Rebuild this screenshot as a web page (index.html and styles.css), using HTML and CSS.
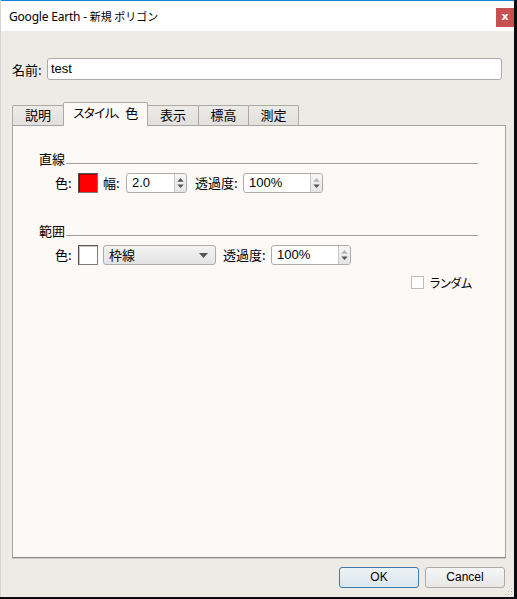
FILE: index.html
```html
<!DOCTYPE html>
<html lang="ja">
<head>
<meta charset="utf-8">
<title>Google Earth - 新規 ポリゴン</title>
<link rel="stylesheet" href="styles.css">
</head>
<body>
<div class="window">
  <div class="titlebar">
    <span class="title">Google Earth - <span class="title-ja">新規 ポリゴン</span></span>
    <div class="close">x</div>
  </div>
  <div class="client">
    <div class="name-row">
      <span class="name-label">名前:</span>
      <div class="textbox">test</div>
    </div>
    <div class="tabs">
      <div class="tab t1">説明</div>
      <div class="tab t2 active"><span class="narrow">スタイル、</span>色</div>
      <div class="tab t3">表示</div>
      <div class="tab t4">標高</div>
      <div class="tab t5">測定</div>
    </div>
    <div class="panel">
      <div class="group-head"><span class="group-title">直線</span><span class="group-line"></span></div>
      <div class="row">
        <span class="lbl w-color">色:</span>
        <span class="swatch red"></span>
        <span class="lbl w-width">幅:</span>
        <div class="spin w61">
          <span class="spin-val">2.0</span>
          <svg class="arrows" width="12" height="18" viewBox="0 0 12 18"><path d="M2.5 7.5 L6 3.5 L9.5 7.5Z" fill="#555"/><path d="M2.5 10.5 L6 14.5 L9.5 10.5Z" fill="#555"/></svg>
        </div>
        <span class="lbl w-alpha">透過度:</span>
        <div class="spin w80">
          <span class="spin-val">100%</span>
          <svg class="arrows" width="12" height="18" viewBox="0 0 12 18"><path d="M2.5 7.5 L6 3.5 L9.5 7.5Z" fill="#b4b4b4"/><path d="M2.5 10.5 L6 14.5 L9.5 10.5Z" fill="#555"/></svg>
        </div>
      </div>
      <div class="group-head second"><span class="group-title">範囲</span><span class="group-line"></span></div>
      <div class="row">
        <span class="lbl w-color">色:</span>
        <span class="swatch white"></span>
        <div class="combo">
          <span class="combo-val">枠線</span>
          <svg class="combo-arrow" width="9" height="5" viewBox="0 0 9 5"><path d="M0 0 L9 0 L4.5 5Z" fill="#555"/></svg>
        </div>
        <span class="lbl w-alpha2">透過度:</span>
        <div class="spin w80">
          <span class="spin-val">100%</span>
          <svg class="arrows" width="12" height="18" viewBox="0 0 12 18"><path d="M2.5 7.5 L6 3.5 L9.5 7.5Z" fill="#b4b4b4"/><path d="M2.5 10.5 L6 14.5 L9.5 10.5Z" fill="#555"/></svg>
        </div>
      </div>
      <div class="check-row">
        <span class="checkbox"></span>
        <span class="check-label">ランダム</span>
      </div>
    </div>
    <div class="footer">
      <button class="btn ok">OK</button>
      <button class="btn cancel">Cancel</button>
    </div>
  </div>
  <svg class="grip" width="9" height="9" viewBox="0 0 9 9">
    <rect x="7" y="1" width="1" height="1" fill="#b8b5b1"/>
    <rect x="4" y="4" width="1" height="1" fill="#b8b5b1"/>
    <rect x="7" y="4" width="1" height="1" fill="#b8b5b1"/>
    <rect x="1" y="7" width="1" height="1" fill="#b8b5b1"/>
    <rect x="4" y="7" width="1" height="1" fill="#b8b5b1"/>
    <rect x="7" y="7" width="1" height="1" fill="#b8b5b1"/>
  </svg>
</div>
</body>
</html>
```
FILE: styles.css
```css
* { box-sizing: border-box; }
html, body { margin: 0; padding: 0; }
body {
  width: 517px;
  height: 599px;
  overflow: hidden;
  background: #0b0c12;
  font-family: "Liberation Sans", "Noto Sans CJK JP", sans-serif;
  font-size: 12px;
  color: #000;
}
.window {
  position: relative;
  width: 514px;
  height: 597px;
  background: #eeebe7;
  border-left: 1px solid #d6d4d1;
  display: flex;
  flex-direction: column;
}
.titlebar {
  height: 31px;
  background: #fff;
  border-top: 1px solid #1883d7;
  display: flex;
  align-items: flex-start;
  justify-content: space-between;
  padding-left: 8px;
}
.title {
  font-family: "Noto Sans", "Noto Sans CJK JP", sans-serif;
  font-size: 12px;
  line-height: 14px;
  margin-top: 8px;
  letter-spacing: -0.2px;
}
.title-ja {
  font-family: "Noto Sans CJK JP", sans-serif;
  font-size: 11px;
  letter-spacing: 0;
}
.close {
  width: 18px;
  height: 19px;
  margin-top: 7px;
  background: #c75050;
  color: #fff;
  font-family: "DejaVu Sans", sans-serif;
  font-weight: bold;
  font-size: 11px;
  line-height: 17px;
  text-align: center;
}
.client {
  flex: 1;
  display: flex;
  flex-direction: column;
  padding: 0 8px 0 11px;
}
.name-row {
  margin-top: 27px;
  display: flex;
  align-items: center;
  height: 22px;
}
.name-label {
  width: 35px;
  font-family: "Noto Sans CJK JP", sans-serif;
  font-size: 13px;
}
.textbox {
  width: 455px;
  height: 22px;
  background: #fff;
  border: 1px solid #ababab;
  border-radius: 3px;
  padding-left: 3px;
  line-height: 20px;
  font-family: "Liberation Sans", sans-serif;
  font-size: 13px;
}
.tabs {
  margin-top: 22px;
  height: 23px;
  display: flex;
  align-items: flex-end;
  position: relative;
  z-index: 1;
}
.tab {
  height: 20px;
  border: 1px solid #adaaa6;
  border-bottom: none;
  margin-right: -1px;
  background: linear-gradient(#ecebe8, #e2e0dc);
  font-family: "Noto Sans CJK JP", sans-serif;
  font-size: 13px;
  text-align: center;
  line-height: 18px;
  border-radius: 2px 2px 0 0;
}
.narrow { letter-spacing: -2px; font-size: 12.5px; }
.t1 { width: 52px; }
.t2 { width: 85px; }
.t3 { width: 52px; }
.t4 { width: 51px; }
.t5 { width: 51px; }
.tab.active {
  height: 24px;
  margin-bottom: -1px;
  background: #fcf9f6;
  line-height: 20px;
  position: relative;
  z-index: 2;
}
.panel {
  width: 494px;
  height: 433px;
  background: #fcf9f6;
  border: 1px solid #a7a4a0;
  border-bottom-color: #8f8c88;
  box-shadow: 0 1px 0 #cfccc8;
  padding: 26px 27px 0 26px;
  display: flex;
  flex-direction: column;
}
.group-head {
  display: flex;
  align-items: flex-end;
  height: 14px;
}
.group-head.second { margin-top: 31px; }
.group-title {
  font-family: "Noto Sans CJK JP", sans-serif;
  font-size: 13px;
  line-height: 14px;
  margin-top: -2px;
}
.group-line {
  flex: 1;
  height: 1px;
  background: #a3a09c;
  margin-bottom: 2px;
  margin-left: 1px;
}
.row {
  margin-top: 7px;
  height: 20px;
  display: flex;
  align-items: center;
}
.lbl {
  font-family: "Noto Sans CJK JP", sans-serif;
  font-size: 13px;
  line-height: 14px;
}
.w-color { width: 23px; margin-left: 16px; }
.w-width { width: 23px; margin-left: 5px; }
.w-alpha { width: 48px; margin-left: 8px; }
.w-alpha2 { width: 48px; margin-left: 7px; }
.swatch {
  width: 20px;
  height: 20px;
  border: 1px solid #7a7a7a;
  border-left-color: #4a4a4a;
  border-top-color: #5a5a5a;
}
.swatch.red { background: #ff0000; box-shadow: inset 1px 1px 0 #9a0000; }
.swatch.white { background: #fff; box-shadow: inset 1px 1px 0 #c8c8c8; }
.spin {
  height: 20px;
  display: flex;
  background: #fff;
  border: 1px solid #acacac;
  border-radius: 3px;
  overflow: hidden;
}
.w61 { width: 61px; }
.w80 { width: 80px; }
.spin-val {
  flex: 1;
  padding-left: 5px;
  line-height: 18px;
  font-family: "Liberation Sans", sans-serif;
  font-size: 13px;
}
.arrows {
  display: block;
  width: 12px;
  height: 18px;
  border-left: 1px solid #c9c9c9;
  background: linear-gradient(#f7f7f7, #e4e4e4);
}
.combo {
  width: 113px;
  height: 20px;
  margin-left: 5px;
  border: 1px solid #acacac;
  border-radius: 3px;
  background: linear-gradient(#f3f3f3, #e3e3e3);
  display: flex;
  align-items: center;
  justify-content: space-between;
  padding: 0 7px 0 5px;
}
.combo-val {
  font-family: "Noto Sans CJK JP", sans-serif;
  font-size: 13px;
  line-height: 14px;
}
.combo-arrow { display: block; }
.check-row {
  margin-top: 11px;
  display: flex;
  align-items: center;
  justify-content: flex-end;
  padding-right: 7px;
  height: 13px;
}
.checkbox {
  width: 13px;
  height: 13px;
  border: 1px solid #bcbcbc;
  background: #fff;
}
.check-label {
  margin-left: 5px;
  font-family: "Noto Sans CJK JP", sans-serif;
  font-size: 12px;
  line-height: 14px;
  letter-spacing: -1.5px;
}
.footer {
  margin-top: 9px;
  display: flex;
  justify-content: flex-end;
  gap: 6px;
  padding-right: 1px;
}
.btn {
  width: 80px;
  height: 21px;
  margin: 0;
  padding: 0;
  border-radius: 3px;
  font-family: "Liberation Sans", sans-serif;
  font-size: 12px;
  color: #000;
  line-height: 19px;
}
.btn.ok {
  border: 1px solid #3d7bad;
  background: linear-gradient(#ecf3f8, #dbe6ee);
}
.btn.cancel {
  border: 1px solid #acacac;
  background: linear-gradient(#f6f6f6, #e7e7e7);
}
.grip {
  position: absolute;
  right: 1px;
  bottom: 1px;
}
```
